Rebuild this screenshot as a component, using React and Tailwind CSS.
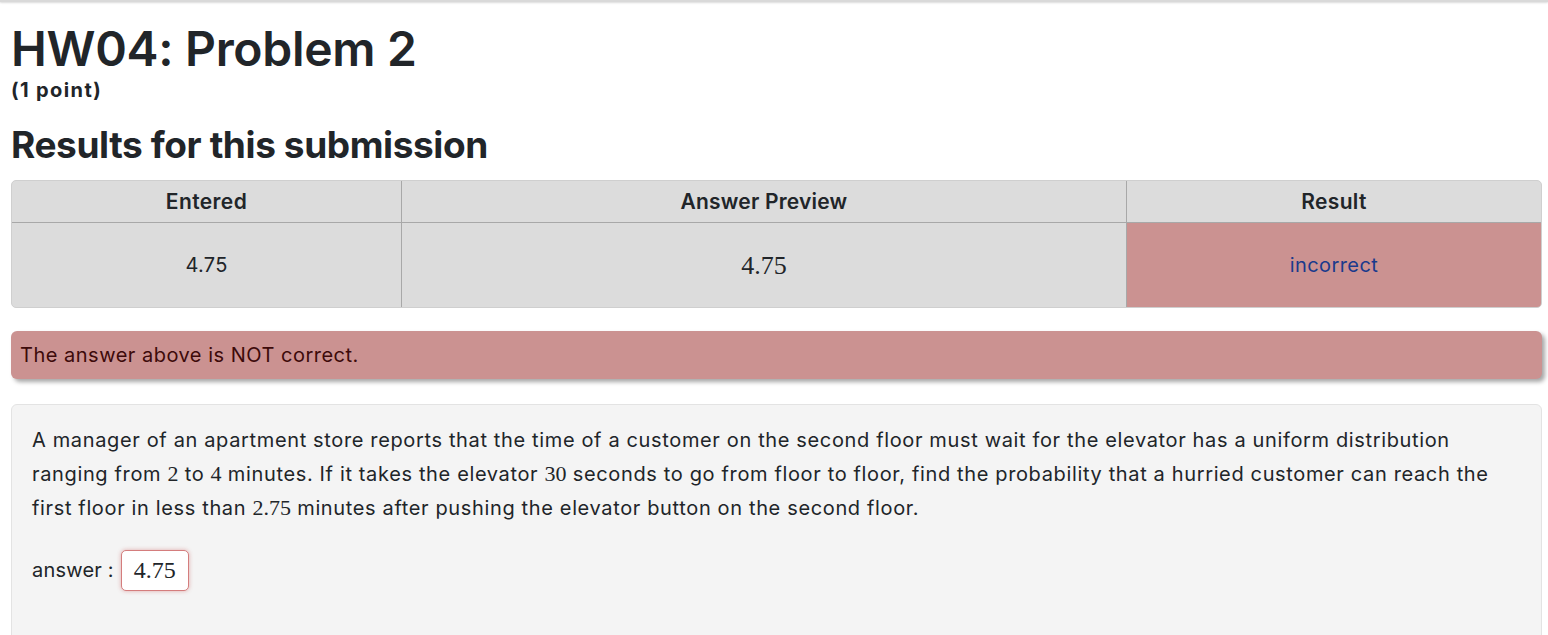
import React from "react";

function M({ children }) {
  return <span className="font-['Liberation_Serif'] text-[22px] tracking-normal">{children}</span>;
}

export default function App() {
  return (
    <div className="min-h-screen bg-white text-[#212529] font-['Inter']">
      <div className="h-[2px] bg-[#d9d9d9] shadow-[0_1px_2px_rgba(0,0,0,0.15)]" />

      <div className="pl-[11px] pr-[6px]">
        <h1 className="mt-[19px] text-[48px] font-semibold leading-[56px] tracking-[-0.3px]">
          HW04: Problem 2
        </h1>
        <div className="mt-[1px] text-[20px] font-bold leading-[24px] tracking-[1.4px]">(1 point)</div>

        <h2 className="mt-[20px] text-[37px] font-bold leading-[46px] tracking-[-0.4px]">
          Results for this submission
        </h2>

        <div className="mt-[12px] overflow-hidden rounded-[5px] border border-[#cfcfcf] bg-[#dcdcdc]">
          <div className="grid grid-cols-[390px_725px_1fr]">
            <div className="flex h-[42px] items-center justify-center border-b border-r border-[#a8a8a8] text-[21px] font-semibold tracking-[0.4px]">
              Entered
            </div>
            <div className="flex h-[42px] items-center justify-center border-b border-r border-[#a8a8a8] text-[21px] font-semibold tracking-[0.2px]">
              Answer Preview
            </div>
            <div className="flex h-[42px] items-center justify-center border-b border-[#a8a8a8] text-[21px] font-semibold tracking-[0.3px]">
              Result
            </div>

            <div className="flex h-[84px] items-center justify-center border-r border-[#a8a8a8] text-[20px] tracking-[0.3px]">
              4.75
            </div>
            <div className="flex h-[84px] items-center justify-center border-r border-[#a8a8a8]">
              <span className="font-['Liberation_Serif'] text-[26px]">4.75</span>
            </div>
            <div className="flex h-[84px] items-center justify-center bg-[#cb9291] text-[20px] tracking-[0.4px] text-[#1a3a8c]">
              incorrect
            </div>
          </div>
        </div>

        <div className="mt-[23px] rounded-[6px] bg-[#cb9291] px-[9px] py-[11px] text-[20px] leading-[26px] tracking-[0.5px] text-[#3d0a0a] shadow-[3px_3px_4px_rgba(0,0,0,0.35)]">
          The answer above is NOT correct.
        </div>

        <div className="mt-[25px] min-h-[240px] rounded-[6px] border border-[#e3e3e3] bg-[#f4f4f4] px-[20px] pt-[19px] text-[20px] leading-[33px] tracking-[0.64px]">
          <p className="whitespace-nowrap">
            A manager of an apartment store reports that the time of a customer on the second floor must wait for the elevator has a uniform distribution
            <br />
            ranging from <M>2</M> to <M>4</M> minutes. If it takes the elevator <M>30</M> seconds to go from floor to floor, find the probability that a hurried customer can reach the
            <br />
            first floor in less than <M>2.75</M> minutes after pushing the elevator button on the second floor.
          </p>

          <div className="mt-[25px] flex items-center gap-[7px]">
            <span className="tracking-[0.2px]">answer :</span>
            <span className="flex h-[41px] w-[68px] items-center justify-center rounded-[5px] border border-[#d47d7d] bg-white shadow-[0_0_4px_rgba(200,80,80,0.45)]">
              <span className="font-['Liberation_Serif'] text-[24px] tracking-normal">4.75</span>
            </span>
          </div>
        </div>
      </div>
    </div>
  );
}
